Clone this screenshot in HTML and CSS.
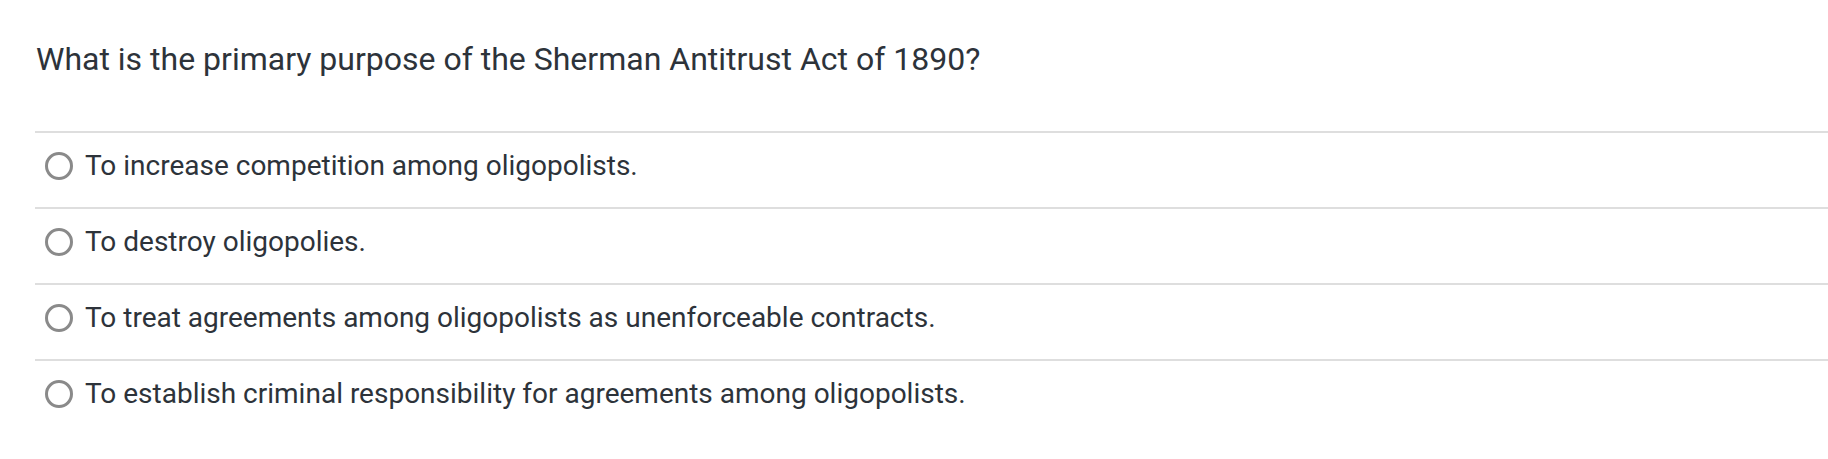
FILE: index.html
```html
<!DOCTYPE html>
<html lang="en">
<head>
<meta charset="utf-8">
<title>Quiz</title>
<link rel="stylesheet" href="styles.css">
</head>
<body>
<div class="quiz">
  <h1 class="question">What is the primary purpose of the Sherman Antitrust Act of 1890?</h1>
  <ul class="options">
    <li class="option"><span class="radio"></span><span class="label">To increase competition among oligopolists.</span></li>
    <li class="option"><span class="radio"></span><span class="label">To destroy oligopolies.</span></li>
    <li class="option"><span class="radio"></span><span class="label">To treat agreements among oligopolists as unenforceable contracts.</span></li>
    <li class="option"><span class="radio"></span><span class="label">To establish criminal responsibility for agreements among oligopolists.</span></li>
  </ul>
</div>
</body>
</html>
```
FILE: styles.css
```css
html, body {
  margin: 0;
  padding: 0;
  background: #ffffff;
}
body {
  font-family: Roboto, "Liberation Sans", Arial, sans-serif;
  color: #2d333a;
}
.quiz {
  padding: 39px 0 0 35px;
}
.question {
  margin: 0 0 0 1px;
  font-size: 32px;
  font-weight: 400;
  line-height: 40px;
  height: 92px;
}
.options {
  list-style: none;
  margin: 0;
  padding: 0;
}
.option {
  box-sizing: border-box;
  display: flex;
  align-items: center;
  height: 76px;
  border-top: 2px solid #dedede;
  padding: 0 0 8px 10px;
  gap: 12px;
}
.radio {
  flex: none;
  box-sizing: border-box;
  width: 28px;
  height: 28px;
  border: 3px solid #8a8a8a;
  border-radius: 50%;
}
.label {
  font-size: 28px;
  line-height: 32px;
}
```
